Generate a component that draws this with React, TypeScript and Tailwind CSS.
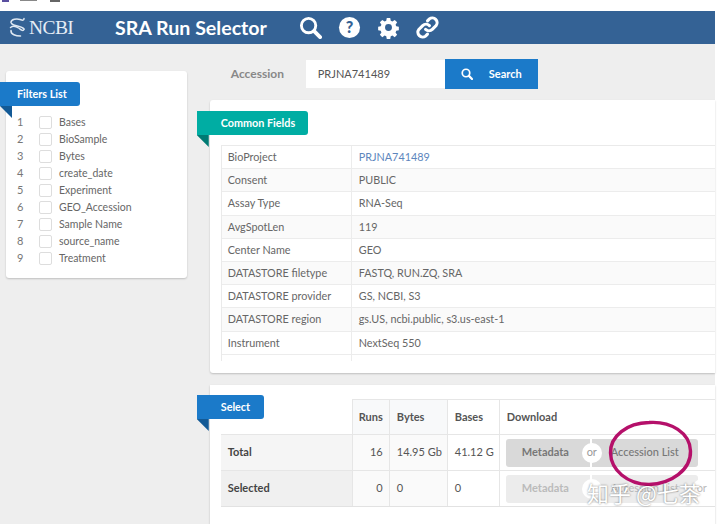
import React from "react";

const filters = ["Bases", "BioSample", "Bytes", "create_date", "Experiment", "GEO_Accession", "Sample Name", "source_name", "Treatment"];
const fields: [string, string][] = [
  ["BioProject", "PRJNA741489"],
  ["Consent", "PUBLIC"],
  ["Assay Type", "RNA-Seq"],
  ["AvgSpotLen", "119"],
  ["Center Name", "GEO"],
  ["DATASTORE filetype", "FASTQ, RUN.ZQ, SRA"],
  ["DATASTORE provider", "GS, NCBI, S3"],
  ["DATASTORE region", "gs.US, ncbi.public, s3.us-east-1"],
  ["Instrument", "NextSeq 550"],
];

function Search({ size, sw = 3 }: { size: number; sw?: number }) {
  return (
    <svg width={size} height={size} viewBox="0 0 24 24" fill="none" stroke="white" strokeWidth={sw} strokeLinecap="round">
      <circle cx="10" cy="10" r="7.5" />
      <path d="M15.8 15.8 22 22" strokeWidth={sw + 1} />
    </svg>
  );
}

function Ribbon({ label, color, fold, w, pad, className }: { label: string; color: string; fold: string; w: string; pad: string; className: string }) {
  return (
    <div className={`absolute ${className}`}>
      <div className={`h-6 rounded-r-[3px] flex items-center text-white font-bold text-[10.8px] ${color} ${w} ${pad}`}>{label}</div>
      <div className={`w-3 h-3 ${fold} [clip-path:polygon(0_0,100%_0,100%_100%)]`} />
    </div>
  );
}

function OrDot({ className }: { className?: string }) {
  return (
    <span className={`absolute top-[4px] w-[20px] h-[20px] rounded-full bg-white font-normal flex items-center justify-center ${className ?? ""}`}>or</span>
  );
}

export default function App() {
  return (
    <div className="w-[720px] h-[524px] overflow-hidden bg-white relative text-[#555] text-[11px] font-['Lato','Carlito','Liberation_Sans',sans-serif]">
      {/* clipped browser strip */}
      <div className="h-[11px] flex items-start pl-[2px]">
        <div className="w-[7px] h-[2px] bg-[#5a4fa0]" />
        <div className="w-[17px] h-[1px] ml-[11px] bg-[#888]" />
        <div className="w-[10px] h-[2px] ml-[13px] bg-[#666]" />
      </div>

      <div className="w-[715px] bg-[#eeeeee] h-[513px]">
        {/* header */}
        <header className="h-[33px] bg-[#346295] flex items-center text-white">
          <div className="flex items-center pl-[9px] w-[115px]">
            <svg width="17" height="21" viewBox="0 0 17 21" fill="none" stroke="#dfe8f2" strokeWidth="1.5" strokeLinecap="round">
              <path d="M2 5.5C2 2 8 1.5 11 2.5S15 3.5 15 1.5" />
              <path d="M2.5 6.5c2.5 3 10 2 12.5 5.5" />
              <path d="M1.5 10.5c2-1.5 5-1.5 8 .5s4.5 3.5 5.5 1.5" />
              <path d="M2 13.5c-.5 4 5 5.5 9.5 5.5" />
            </svg>
            <span className="ml-[3px] font-['Liberation_Serif',serif] text-[19.5px] tracking-[-0.6px] text-[#e6edf5]">NCBI</span>
          </div>
          <h1 className="text-[19.6px] font-bold whitespace-nowrap w-[184px]">SRA Run Selector</h1>
          <div className="flex items-center gap-[16px]">
            <Search size={23} />
            <svg width="23" height="23" viewBox="0 0 24 24">
              <circle cx="12" cy="12" r="11" fill="white" />
              <text x="12" y="18" textAnchor="middle" fontSize="17" fontWeight="900" fill="#346295" fontFamily="Lato, sans-serif">?</text>
            </svg>
            <svg width="23" height="23" viewBox="0 0 24 24" fill="white">
              <path fillRule="evenodd" d="M10 1h4l.6 3.2 1.9.8 2.7-1.8 2.8 2.8-1.8 2.7.8 1.9 3 .6v4l-3 .6-.8 1.9 1.8 2.7-2.8 2.8-2.7-1.8-1.9.8-.6 3h-4l-.6-3-1.9-.8-2.7 1.8-2.8-2.8 1.8-2.7-.8-1.9-3-.6v-4l3-.6.8-1.9L2 6l2.8-2.8L7.5 5l1.9-.8zM12 8a4 4 0 1 0 0 8 4 4 0 0 0 0-8z" transform="translate(1.2 1.2) scale(.9)" />
            </svg>
            <svg width="23" height="23" viewBox="0 0 24 24" fill="none" stroke="white" strokeWidth="3.2" strokeLinecap="round">
              <path d="M10 14a5 5 0 0 0 7 0l4-4a5 5 0 0 0-7-7l-2 2" />
              <path d="M14 10a5 5 0 0 0-7 0l-4 4a5 5 0 0 0 7 7l2-2" />
            </svg>
          </div>
        </header>

        <div className="flex items-start pl-[6px]">
          {/* filters */}
          <aside className="relative w-[181px] h-[207px] mt-[27px] bg-white rounded-[3px] shadow-[0_1px_2px_rgba(0,0,0,0.2)] pl-[11px] pt-[43px]">
            <Ribbon label="Filters List" color="bg-[#1b7ac9]" fold="bg-[#135a96]" w="w-[80px]" pad="pl-[17px]" className="top-[11px] -left-[6px]" />
            {filters.map((f, i) => (
              <div key={f} className="h-[17px] flex items-center">
                <span className="w-[22px] text-[11px] text-[#777]">{i + 1}</span>
                <span className="w-[13px] h-[13px] border border-[#ddd] rounded-[2px] bg-white" />
                <span className="ml-[7px] text-[10.5px] text-[#666]">{f}</span>
              </div>
            ))}
          </aside>

          <main className="ml-[23px] w-[506px]">
            {/* search */}
            <div className="flex items-center h-[30px] mt-[15px] pl-[21px]">
              <span className="w-[75px] font-bold text-[#888] text-[12px]">Accession</span>
              <div className="w-[139px] h-[28px] bg-white flex items-center pl-[12px] text-[11px] text-[#555]">PRJNA741489</div>
              <button className="w-[93px] h-[30px] bg-[#1b7ac9] flex items-center text-white font-bold text-[11px]">
                <span className="w-[44px] flex justify-center"><Search size={12} sw={3.4} /></span>
                <span>Search</span>
              </button>
            </div>

            {/* common fields */}
            <section className="relative mt-[11px] h-[273px] bg-white rounded-l-[3px] shadow-[0_1px_2px_rgba(0,0,0,0.2)] pl-[11px] pt-[45px] overflow-visible">
              <Ribbon label="Common Fields" color="bg-[#00ada3]" fold="bg-[#007a73]" w="w-[111px]" pad="pl-[24px]" className="top-[11px] -left-[13px]" />
              <div className="h-[216px] overflow-hidden border-l border-t border-[#eaeaea]">
                {fields.map(([k, v], i) => (
                  <div key={k} className={`h-[23.2px] flex items-center border-b border-[#ececec] ${i % 2 ? "bg-[#fafafa]" : "bg-white"}`}>
                    <div className="w-[130px] pl-[6px] text-[10.8px] text-[#666] h-full flex items-center border-r border-[#ececec]">{k}</div>
                    <div className={`pl-[7px] text-[10.8px] ${i === 0 ? "text-[#5d86bd]" : "text-[#666]"}`}>{v}</div>
                  </div>
                ))}
                <div className="h-[7px] w-[130px] border-r border-[#ececec]" />
              </div>
            </section>

            {/* select */}
            <section className="relative mt-[12px] h-[139px] bg-white shadow-[0_1px_2px_rgba(0,0,0,0.2)] pl-[11px] pt-[14px]">
              <Ribbon label="Select" color="bg-[#1b7ac9]" fold="bg-[#135a96]" w="w-[67px]" pad="pl-[24px]" className="top-[10px] -left-[13px]" />
              <div className="grid grid-cols-[131px_37px_58px_52px_1fr] grid-rows-[35px_36px_36px] text-[11px] text-[#555] border-b border-[#e2e2e2]">
                <div />
                <div className="bg-[#f8f9fa] border-l border-t border-[#e6e6e6] flex items-center pl-[6px] font-bold">Runs</div>
                <div className="bg-[#f8f9fa] border-l border-t border-[#e6e6e6] flex items-center pl-[7px] font-bold">Bytes</div>
                <div className="border-l border-t border-[#e6e6e6] flex items-center pl-[7px] font-bold">Bases</div>
                <div className="border-l border-t border-[#e6e6e6] flex items-center pl-[7px] font-bold">Download</div>

                <div className="bg-[#f5f5f5] border-t border-[#e6e6e6] flex items-center pl-[7px] font-bold text-[#444]">Total</div>
                <div className="bg-[#fafafa] border-l border-t border-[#e6e6e6] flex items-center justify-end pr-[6px]">16</div>
                <div className="bg-[#fafafa] border-l border-t border-[#e6e6e6] flex items-center pl-[7px] whitespace-nowrap">14.95 Gb</div>
                <div className="border-l border-t border-[#e6e6e6] flex items-center pl-[7px] whitespace-nowrap">41.12 G</div>
                <div className="border-l border-t border-[#e6e6e6] flex items-center pl-[6px]">
                  <div className="relative h-[28px] flex items-center gap-[2px] font-bold text-[#777] text-[11px]">
                    <span className="w-[84px] h-full bg-[#d9d9d9] rounded-l-[3px] flex items-center pl-[16px]">Metadata</span>
                    <span className="w-[106px] h-full bg-[#d9d9d9] rounded-r-[3px] flex items-center pl-[19px] font-medium">Accession List</span>
                    <OrDot className="left-[76px] text-[#999]" />
                  </div>
                </div>

                <div className="bg-[#f0f0f0] border-t border-[#e6e6e6] flex items-center pl-[7px] font-bold text-[#444]">Selected</div>
                <div className="bg-[#fafafa] border-l border-t border-[#e6e6e6] flex items-center justify-end pr-[6px]">0</div>
                <div className="bg-[#fafafa] border-l border-t border-[#e6e6e6] flex items-center pl-[7px]">0</div>
                <div className="border-l border-t border-[#e6e6e6] flex items-center pl-[7px]">0</div>
                <div className="border-l border-t border-[#e6e6e6] flex items-center pl-[6px]">
                  <div className="relative h-[28px] flex items-center gap-[2px] font-bold text-[#bbb] text-[11px]">
                    <span className="w-[84px] h-full bg-[#ececec] rounded-l-[3px] flex items-center pl-[16px]">Metadata</span>
                    <span className="w-[106px] h-full bg-[#ececec] rounded-r-[3px] flex items-center pl-[19px] font-medium">Accession List</span>
                    <OrDot className="left-[76px] text-transparent" />
                    <OrDot className="left-[186px] text-[#bbb]" />
                  </div>
                </div>
              </div>
            </section>
          </main>
        </div>
      </div>

      {/* hand-drawn circle annotation */}
      <svg className="absolute left-[605px] top-[418px]" width="92" height="72" viewBox="0 0 92 72" fill="none">
        <path d="M44 4.5C66 3 85 15 85.5 33 86 52 66 66 44 66.5 22 66 6 52 5.5 35 5 18 22 5 44 4.5Z" stroke="#b5106a" strokeWidth="3.4" />
      </svg>
      {/* watermark */}
      <div className="absolute left-[587px] top-[479px] text-[22px] leading-[26px] text-white whitespace-nowrap [text-shadow:0_0_2px_rgba(0,0,0,0.55)] font-['Noto_Sans_CJK_SC',sans-serif]">知乎 @七茶</div>
    </div>
  );
}
